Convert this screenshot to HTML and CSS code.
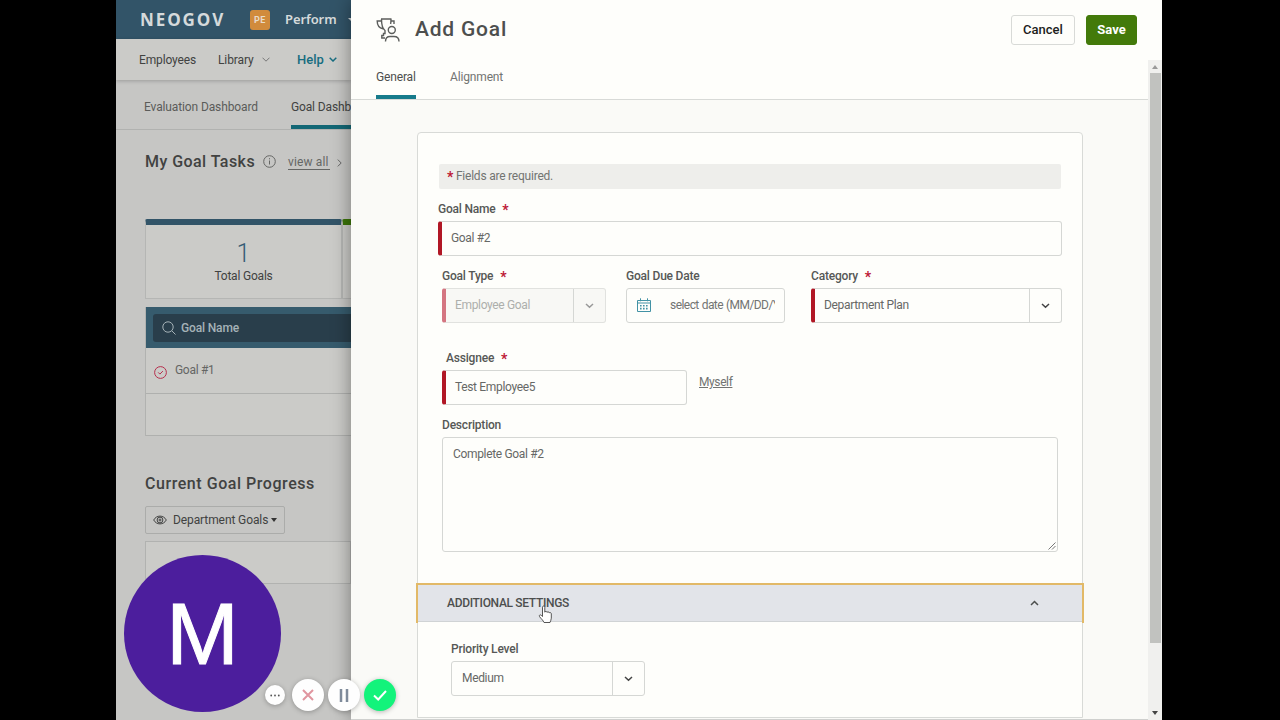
FILE: index.html
```
<!DOCTYPE html>
<html lang="en"><head><meta charset="utf-8"/><meta name="viewport" content="width=device-width, initial-scale=1"/>
<title>Add Goal</title>
<link rel="stylesheet" href="styles.css">
</head>
<body>
<div class="screen">

<!-- dashboard behind the drawer -->
<div class="page">
  <div class="topbar"><span class="brand">NEOGOV</span><span class="badge">PE</span><span class="product">Perform</span><span class="caret"></span></div>
  <div class="nav">
    <span class="nav-emp">Employees</span>
    <span class="nav-lib">Library</span>
    <svg class="nav-arrow" width="8" height="5" viewBox="0 0 8 5"><path d="M.5.7 4 4.2 7.5.7"/></svg>
    <span class="nav-help">Help</span>
    <svg class="help-arrow" width="8" height="5" viewBox="0 0 8 5"><path d="M.7.8 4 4 7.3.8"/></svg>
  </div>
  <div class="dash-tabs"><span class="dtab">Evaluation Dashboard</span><span class="dtab active">Goal Dashboard</span></div>
  <div class="dash">
    <div class="dash-title">
      <h2 class="h-tasks">My Goal Tasks</h2>
      <svg class="info" width="13" height="13" viewBox="0 0 13 13"><circle cx="6.5" cy="6.5" r="5.8"/><path d="M6.5 5.5v4M6.5 3.2v1.1"/></svg>
      <a class="view-all">view all</a>
      <svg class="next" width="5" height="8" viewBox="0 0 5 8"><path d="M.8.6 4.2 4 .8 7.4"/></svg>
    </div>
    <div class="stats">
      <div class="stat"><b>1</b><span>Total Goals</span></div>
      <div class="stat green"></div>
    </div>
    <div class="table">
      <div class="thead"><div class="search">
        <svg width="14" height="14" viewBox="0 0 14 14"><circle cx="6" cy="6" r="5.2"/><path d="m9.8 9.8 3.7 3.7"/></svg>
        <span>Goal Name</span></div></div>
      <div class="trow first">
        <svg width="13" height="13" viewBox="0 0 13 13"><circle cx="6.5" cy="6.5" r="5.9"/><path d="m4.2 6.4 1.7 1.7 3-3"/></svg>
        <span>Goal #1</span></div>
      <div class="trow"></div>
    </div>
    <h2 class="h-progress">Current Goal Progress</h2>
    <div class="dropdown">
      <svg width="14" height="10" viewBox="0 0 14 10"><path d="M.7 5C3.5-.2 10.5-.2 13.3 5 10.5 10.2 3.5 10.2.7 5Z"/><circle cx="7" cy="5" r="2.9"/><circle cx="7" cy="5" r="1"/></svg>
      <span>Department Goals</span><i></i></div>
    <div class="chart"></div>
  </div>
</div>

<!-- add goal drawer -->
<div class="drawer">
  <div class="drawer-head">
    <svg class="trophy" width="24" height="24" viewBox="0 0 24 24"><path d="M5 1h10.500M5.500 1c0 6 .5 9.500 3.500 11.500v3H7.500v2H5.800V20H9M15 1c0 2-.1 3.500-.4 5M5.500 3H1.200c0 4.500 2 7 5.800 7.800M15 3h3v3"/><circle cx="15.800" cy="12" r="3.500"/><path d="M9.500 23.500c0-3.500 2-5 4.500-5h4c2.500 0 5 1.500 5 5"/></svg>
    <h1>Add Goal</h1>
    <button class="btn cancel">Cancel</button>
    <button class="btn save">Save</button>
  </div>
  <div class="drawer-main">
    <div class="content">
      <div class="tabs"><span class="tab on">General</span><span class="tab">Alignment</span></div>
      <div class="card">
        <div class="notice"><em>*</em> Fields are required.</div>
        <div class="field name">
          <label>Goal Name <em>*</em></label>
          <div class="input req">Goal #2</div>
        </div>
        <div class="row">
          <div class="field type">
            <label>Goal Type <em>*</em></label>
            <div class="input req select disabled"><span>Employee Goal</span><i><svg width="9" height="6" viewBox="0 0 9 6"><path d="m1 1 3.500 3.300L8 1"/></svg></i></div>
          </div>
          <div class="field due">
            <label>Goal Due Date</label>
            <div class="input date">
              <svg width="14" height="14" viewBox="0 0 14 14"><path d="M.5 2.500h13v11H.5zM.5 5h13M3.500.3v3M10.500.3v3"/><path class="dots" d="M3 7.800h8.500M3 10.600h8.500"/></svg>
              <span>select date (MM/DD/Y</span></div>
          </div>
          <div class="field cat">
            <label>Category <em>*</em></label>
            <div class="input req select"><span>Department Plan</span><i><svg width="9" height="6" viewBox="0 0 9 6"><path d="m1 1 3.500 3.300L8 1"/></svg></i></div>
          </div>
        </div>
        <div class="field assignee">
          <label>Assignee <em>*</em></label>
          <div class="assign-row"><div class="input req">Test Employee5</div><a>Myself</a></div>
        </div>
        <div class="field desc">
          <label>Description</label>
          <div class="area">Complete Goal #2
            <svg width="8" height="8" viewBox="0 0 8 8"><path d="M.5 7.500l7-7M4 7.500 7.500 4"/></svg></div>
        </div>
        <div class="accordion"><span>ADDITIONAL SETTINGS</span><svg width="9" height="6" viewBox="0 0 9 6"><path d="m1 5 3.500-3.500L8 5"/></svg></div>
        <div class="field priority">
          <label>Priority Level</label>
          <div class="input select"><span>Medium</span><i><svg width="9" height="6" viewBox="0 0 9 6"><path d="m1 1 3.500 3.300L8 1"/></svg></i></div>
        </div>
      </div>
    </div>
    <div class="scrollbar"><i class="up"></i><div class="thumb"></div><i class="down"></i></div>
  </div>
</div>

<!-- recorder controls -->
<div class="avatar">M</div>
<div class="recorder">
  <span class="rec more"><svg width="10" height="3" viewBox="0 0 10 3"><circle cx="1.200" cy="1.500" r=".9"/><circle cx="5" cy="1.500" r=".9"/><circle cx="8.800" cy="1.500" r=".9"/></svg></span>
  <span class="rec stop"><svg width="12" height="12" viewBox="0 0 12 12"><path d="m1 1 10 10M11 1 1 11"/></svg></span>
  <span class="rec pause"><svg width="10" height="13" viewBox="0 0 10 13"><path d="M2 0v13M8 0v13"/></svg></span>
  <span class="rec done"><svg width="14" height="11" viewBox="0 0 14 11"><path d="m1 5.500 4.200 4L13 1"/></svg></span>
</div>
<svg class="cursor" width="15" height="19" viewBox="0 0 15 19"><path d="M4.500 11.500V2.200c0-1.600 2.300-1.600 2.300 0v5c.2-1.100 2.100-1 2.200.2.500-.9 2.200-.7 2.200.5.700-.8 2.100-.3 2.100.9v4.400c0 1.700-.8 2.500-1.300 4.300H6c-.8-2-2.300-3.200-4.200-5.500-1.300-1.700.4-2.800 1.500-1.600z"/></svg>
</div>
</body></html>
```
FILE: styles.css
```
*{box-sizing:border-box; margin:0; padding:0;}
body{background:#000; font-family:Roboto,"Liberation Sans",sans-serif; font-size:12px; color:#4d4f4e;}
svg{fill:none; stroke:currentColor; flex:none;}
i,em{font-style:normal;}
.screen{position:relative; width:1046px; height:720px; margin-left:116px; overflow:hidden; background:#c6c6c4;}

/* dashboard */
.page{width:235px; height:720px; overflow:hidden; white-space:nowrap; color:#414241;}
.topbar{display:flex; align-items:center; height:39px; padding-left:24px; background:#325468; color:#d5dadb;}
.topbar span,.nav span,.dtab,.stat{flex:none;}
.brand{width:110px; font:bold 17px/39px "Open Sans",sans-serif; letter-spacing:1.9px;}
.badge{width:20px; height:20px; margin-right:15px; border-radius:3px; background:#d18b3c; color:#e9dcc9; font-size:9px; font-weight:700; line-height:20px; text-align:center; letter-spacing:.5px;}
.product{width:63px; font:600 13px/39px "Noto Sans",sans-serif; letter-spacing:-.1px;}
.caret{border:4px solid transparent; border-top-color:#d5dadb; border-bottom:0;}
.nav{display:flex; align-items:center; height:41px; padding-left:23px; background:#cbcbc8; box-shadow:0 1px 4px rgba(0,0,0,.22);}
.nav-emp{width:79px; letter-spacing:-.15px;}
.nav-lib{width:44px; letter-spacing:-.1px;}
.nav-arrow{margin-right:27px; color:#777;}
.nav-help{width:32px; color:#176d80; font-size:13px; font-weight:500;}
.help-arrow{color:#176d80; stroke-width:1.5;}
.dash-tabs{display:flex; height:50px; padding-left:28px; border-bottom:1px solid #b1b2b0; line-height:55px; letter-spacing:-.12px;}
.dtab{height:49px; margin-right:33px; color:#5b5c5a;}
.dtab.active{color:#414241; border-bottom:4px solid #136775;}
.dash{padding-left:29px;}
.dash-title{display:flex; align-items:center; height:62px; color:#656664;}
.dash h2{font-size:16px; font-weight:500; letter-spacing:.55px; color:#414241;}
.dash .h-tasks{width:118px; letter-spacing:.45px;}
.info{margin-right:12px;}
.view-all{width:42px; margin-right:7px; line-height:14px; border-bottom:1px solid #656664; margin-top:3px; letter-spacing:.15px;}
.next{margin-top:3px;}
.stats{display:flex; margin-top:27px;}
.stat{display:flex; flex-direction:column; align-items:center; width:197px; height:80px; padding-top:14px; border:1px solid #b5b6b4; border-top:6px solid #325468; background:#cbcbc8; border-radius:2px 2px 0 0;}
.stat b{font-size:25px; font-weight:300; line-height:30px; color:#365b75;}
.stat span{line-height:15px; letter-spacing:-.2px;}
.stat.green{border-top-color:#3c7509;}
.table{margin-top:8px; border-left:1px solid #b1b2b0; background:#cbcbc8;}
.thead{height:41px; padding:7px 0 0 7px; background:#365b6d;}
.search{display:flex; align-items:center; height:28px; padding-left:9px; border-radius:3px 0 0 3px; background:#293e4b; color:#a5b2b7; font-weight:500;}
.search span{margin-left:5px; letter-spacing:-.15px;}
.trow{height:42px; border-bottom:1px solid #afb0ae;}
.trow.first{display:flex; height:46px; padding:18px 0 0 8px; color:#b62e4c;}
.first span{margin:-3px 0 0 8px; color:#656664; letter-spacing:-.3px;}
.h-progress{margin-top:37px; line-height:22px;}
.dropdown{display:flex; align-items:center; width:140px; height:28px; margin-top:11px; padding-left:7px; border:1px solid #abacaa; border-radius:2px;}
.dropdown span{margin:0 3px 0 6px; letter-spacing:-.1px;}
.dropdown i{border:3px solid transparent; border-top:4px solid #333; border-bottom:0;}
.chart{height:43px; margin-top:7px; border:1px solid #b1b2b0; background:#cbcbc8;}

/* drawer */
.drawer{position:absolute; left:235px; top:0; width:811px; height:720px; background:#fefefb; box-shadow:0 0 18px rgba(0,0,0,.4);}
.drawer-head{display:flex; align-items:center; height:60px; padding:0 25px;}
.trophy{color:#5c5e5c; stroke-width:1.4;}
.drawer-head h1{flex:1; margin:-2px 0 0 15px; font-size:21px; font-weight:500; line-height:58px; letter-spacing:.8px;}
.btn{height:30px; border:1px solid #d8dad7; border-radius:3px; background:#fefefb; color:#1c1d1c; font:500 13px/28px Roboto,sans-serif;}
.cancel{width:64px; margin-right:11px;}
.save{width:51px; border-color:#437a0a; background:#437a0a; color:#fff; font-weight:700;}
.drawer-main{display:flex; height:660px;}
.content{width:797px; height:660px; overflow:hidden; background:#fafaf7; border-bottom:1px solid #cfd0ce;}
.tabs{display:flex; height:40px; padding-left:25px; border-bottom:1px solid #d8dad7; background:#fefefb; line-height:35px; letter-spacing:-.15px;}
.tab{height:39px; margin-right:34px; color:#727472;}
.tab.on{width:40px; border-bottom:4px solid #177b8b; color:#4d4f4e;}
.card{width:666px; height:586px; margin:32px 0 0 66px; padding-top:31px; border:1px solid #d8dad7; border-radius:4px 4px 0 0; background:#fefefb; letter-spacing:-.34px;}
.notice{height:25px; margin:0 21px; padding-left:8px; border-radius:2px; background:#eeeeeb; color:#727472; line-height:25px; letter-spacing:-.22px;}
em{color:#bd1836; font-weight:700; font-size:14px; line-height:10px; vertical-align:-2px;}
.field label{display:block; height:26px; line-height:28px; font-weight:500; letter-spacing:-.2px; color:#565856;}
label em{margin-left:4px;}
.input{height:35px; padding-left:12px; border:1px solid #d5d7d4; border-radius:3px; line-height:32px; color:#666866; background:#fefefb;}
.req{border-left:4px solid #b11725; padding-left:9px;}
.name{margin:6px 20px 0;}
.row{display:flex; margin:6px 20px 0 24px;}
.type{width:164px; margin-right:20px;}
.due{width:159px; margin-right:26px;}
.cat{width:251px;}
.select{display:flex; padding-left:10px;}
.select.req{padding-left:9px;}
.select span{flex:1;}
.select i{display:flex; align-items:center; justify-content:center; width:32px; border-left:1px solid #d5d7d4; color:#444; stroke-width:1.5;}
.disabled{border-color:#e1e2df; border-left-color:#d47581; background:#f8f8f5; color:#adafac;}
.disabled i{color:#999;}
.date{display:flex; align-items:center; padding:0 9px 2px 10px;}
.date svg{color:#4292a5;}
.date span{width:106px; margin-left:19px; overflow:hidden; white-space:nowrap; color:#727472; letter-spacing:-.55px; word-spacing:.5px;}
.dots{stroke-width:1.6; stroke-dasharray:1.6 1.4;}
.assignee{margin:21px 0 0 24px;}
.assignee label{padding-left:4px;}
.assign-row{display:flex;}
.assign-row .input{width:245px;}
.assign-row a{margin:5px 0 0 12px; color:#727472; text-decoration:underline; letter-spacing:-.4px;}
.desc{margin:6px 24px 0;}
.area{position:relative; height:115px; padding:9px 10px; border:1px solid #d5d7d4; border-radius:3px; color:#666866;}
.area svg{position:absolute; right:1px; bottom:1px; color:#777;}
.accordion{position:relative; display:flex; align-items:center; justify-content:space-between; height:40px; margin:31px -2px 0; padding:0 43px 3px 29px; border:2px solid #e2b967; border-bottom:0; background:linear-gradient(#e2e4e9 36px,#d0d3d5 36px,#d0d3d5 37px,#fefefb 37px); font-weight:500; letter-spacing:-.32px; stroke-width:1.5;}
.priority{width:194px; margin:12px 0 0 33px;}
.scrollbar{display:flex; flex-direction:column; align-items:center; width:14px; background:#f0f0ee;}
.scrollbar i{border:3px solid transparent;}
.scrollbar .up{border-bottom:4px solid #999; border-top:0; margin:5px 0 4px;}
.thumb{width:11px; height:570px; background:#c1c2bf;}
.scrollbar .down{border-top:4px solid #444; border-bottom:0; margin-top:auto; margin-bottom:5px;}

/* recorder */
.avatar{position:absolute; left:8px; top:555px; width:157px; height:157px; border-radius:50%; background:#4c1e9d; color:#fff; font:87px/157px "Liberation Sans",sans-serif; text-align:center; -webkit-text-stroke:1px #fff;}
.recorder{position:absolute; left:149px; top:679px; display:flex; align-items:center; gap:4px;}
.rec{display:flex; align-items:center; justify-content:center; width:32px; height:32px; border-radius:50%; background:#fefefe; box-shadow:0 1px 5px rgba(0,0,0,.28);}
.more{width:20px; height:20px; margin-right:3px;}
.more svg{fill:#555; stroke:none;}
.stop{color:#e0959f; stroke-width:2;}
.pause{color:#7f8b9b; stroke-width:2.5;}
.done{background:#13f37b; color:#fff; stroke-width:2;}
.cursor{position:absolute; left:422px; top:605px; fill:#fff; stroke:#444; stroke-width:.9;}
```
